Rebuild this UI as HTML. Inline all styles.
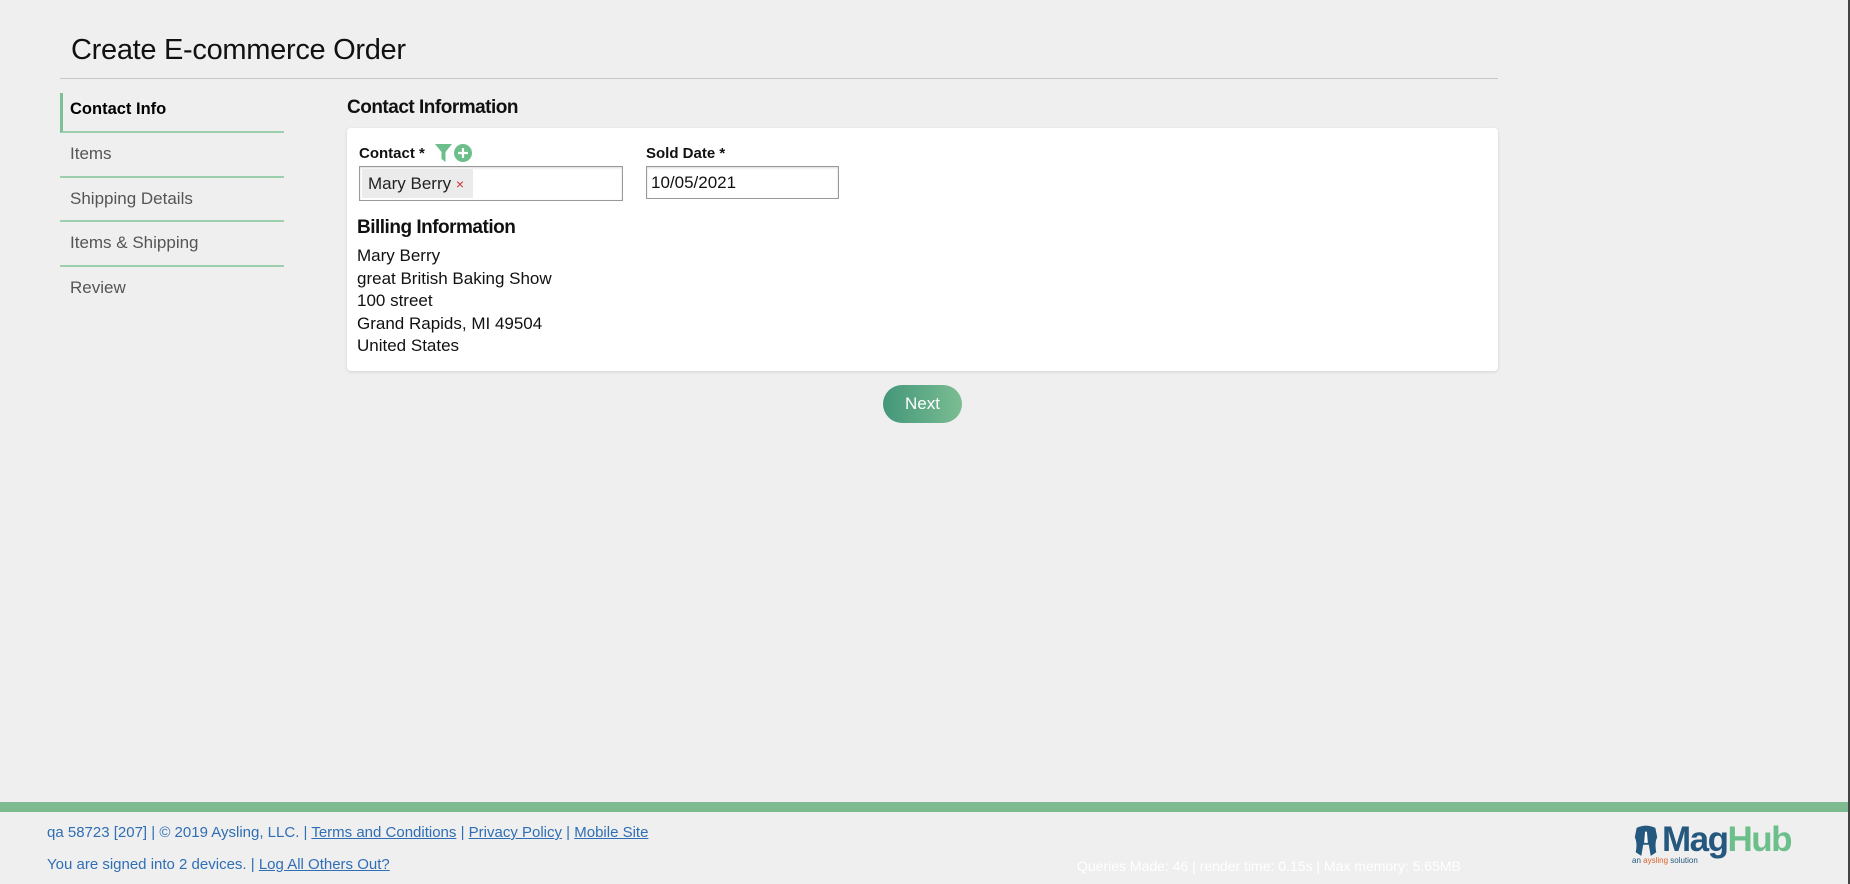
<!DOCTYPE html>
<html><head><meta charset="utf-8"><style>
*{box-sizing:border-box;margin:0;padding:0}
body{width:1850px;height:884px;background:#efefef;font-family:"Liberation Sans",sans-serif;position:relative;overflow:hidden;color:#222}
.abs{position:absolute}
h1{position:absolute;left:71px;top:34px;font-size:29px;font-weight:normal;color:#111;letter-spacing:-0.3px}
.hr{position:absolute;left:60px;top:78px;width:1438px;height:1px;background:#c8c8c8}
.nav{position:absolute;left:60px;top:93px;width:224px}
.nav div{height:44.5px;border-bottom:2px solid #9ccfad;font-size:17px;color:#555;padding-left:10px;line-height:42px}
.nav div:last-child{border-bottom:none}
.nav .act{color:#000;border-left:3px solid #7cc09a;padding-left:7px;line-height:32px;height:40px;font-weight:bold;font-size:16.5px;border-bottom-width:2px}
.sec{position:absolute;left:347px;top:97px;font-size:19px;font-weight:bold;color:#111;letter-spacing:-0.5px}
.card{position:absolute;left:347px;top:128px;width:1151px;height:243px;background:#fff;border-radius:4px;box-shadow:0 1px 3px rgba(0,0,0,.12)}
.lbl{position:absolute;font-size:15px;font-weight:bold;color:#111}
.inp{position:absolute;border:1px solid #999;background:#fff;box-shadow:inset 0 1px 2px rgba(0,0,0,.15)}
.lines{position:absolute;left:357px;top:245px;font-size:17px;line-height:22.6px;color:#111}
.btn{position:absolute;left:883px;top:385px;width:79px;height:38px;border-radius:19px;background:linear-gradient(90deg,#43977a,#7bbd92);color:#fff;font-size:17px;text-align:center;line-height:38px}
.green{position:absolute;left:0;top:802px;width:1848px;height:10px;background:#7dba8f}
.ft{position:absolute;left:47px;font-size:15px;color:#2f6eb5}
.ft a{color:#2f6eb5;text-decoration:underline}
.strip{position:absolute;left:1848px;top:0;width:2px;height:884px;background:#444}
</style></head><body>
<h1>Create E-commerce Order</h1>
<div class="hr"></div>
<div class="nav">
<div class="act">Contact Info</div>
<div>Items</div>
<div>Shipping Details</div>
<div>Items &amp; Shipping</div>
<div>Review</div>
</div>
<div class="sec">Contact Information</div>
<div class="card"></div>
<div class="lbl" style="left:359px;top:145px">Contact *</div>
<svg class="abs" style="left:434px;top:143px" width="40" height="20" viewBox="0 0 40 20"><path d="M1 1h17l-6.5 8v10l-4-3V9z" fill="#6cbf8a"/><circle cx="29" cy="10" r="9" fill="#6cbf8a"/><path d="M29 5v10M24 10h10" stroke="#fff" stroke-width="2.2"/></svg>
<div class="inp" style="left:359px;top:166px;width:264px;height:35px"><div style="position:absolute;left:2px;top:2px;height:29px;width:111px;background:#ebebeb;font-size:17px;line-height:29px;padding-left:6px;color:#222">Mary Berry <span style="color:#c33;font-size:14px">×</span></div></div>
<div class="lbl" style="left:646px;top:145px">Sold Date *</div>
<div class="inp" style="left:646px;top:166px;width:193px;height:33px;font-size:17px;line-height:31px;padding-left:4px;color:#111">10/05/2021</div>
<div class="lbl" style="left:357px;top:217px;font-size:19px;letter-spacing:-0.5px">Billing Information</div>
<div class="lines">Mary Berry<br>great British Baking Show<br>100 street<br>Grand Rapids, MI 49504<br>United States</div>
<div class="btn">Next</div>
<div class="green"></div>
<div class="ft" style="top:824px">qa 58723 [207] | © 2019 Aysling, LLC. | <a>Terms and Conditions</a> | <a>Privacy Policy</a> | <a>Mobile Site</a></div>
<div class="ft" style="top:856px">You are signed into 2 devices. | <a>Log All Others Out?</a></div>
<div class="abs" style="left:1077px;top:858px;font-size:14px;color:#fff">Queries Made: 46 | render time: 0.15s | Max memory: 5.65MB</div>
<svg class="abs" style="left:1632px;top:824px" width="28" height="34" viewBox="0 0 30 36"><path d="M5 4 Q15 -1 25 4 L27 14 Q24 20 26 30 L20 34 L18 22 H12 L10 34 L4 30 Q6 20 3 14Z" fill="#24587e"/><path d="M14 8h2l1 12h-4z" fill="#fff"/></svg>
<div class="abs" style="left:1662px;top:820px;font-size:35px;font-weight:bold;letter-spacing:-1.5px;line-height:40px"><span style="color:#24587e">Mag</span><span style="color:#6cbf8a">Hub</span></div>
<div class="abs" style="left:1632px;top:856px;font-size:8px;color:#24587e">an <span style="color:#e0622a">aysling</span> solution</div>
<div class="strip"></div>
</body></html>
